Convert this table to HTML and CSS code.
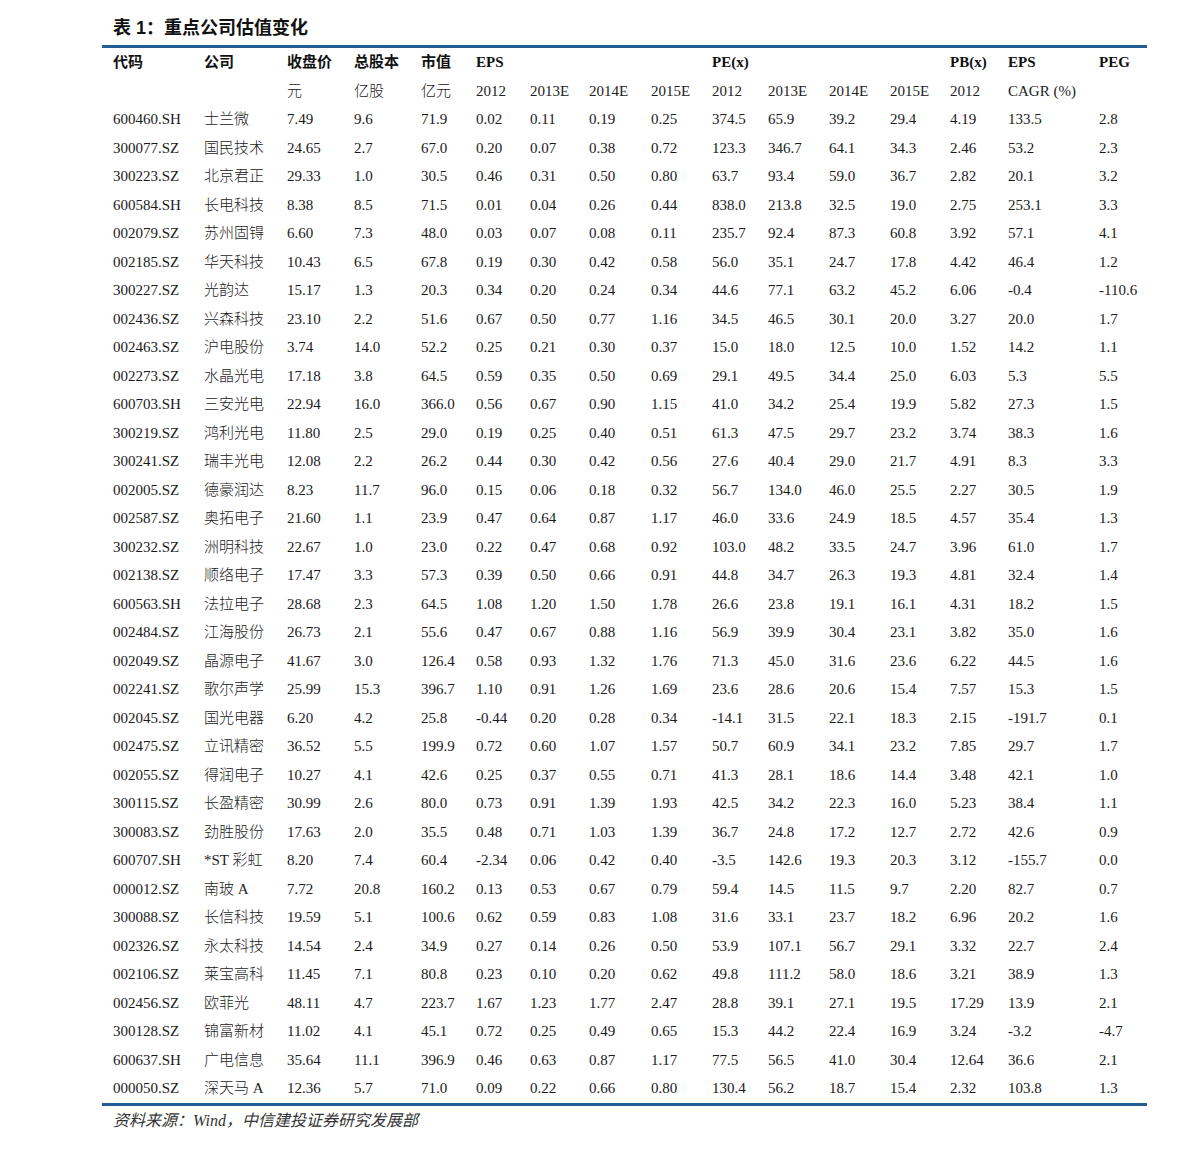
FILE: index.html
```html
<!DOCTYPE html>
<html lang="zh-CN">
<head>
<meta charset="utf-8">
<title>重点公司估值变化</title>
<link rel="stylesheet" href="styles.css">
</head>
<body>
<div class="page">
  <h1 class="title">表 1：重点公司估值变化</h1>
  <table class="tbl">
    <colgroup>
      <col class="w91"><col class="w83"><col class="w67"><col class="w67"><col class="w55">
      <col class="w54"><col class="w59"><col class="w62"><col class="w61">
      <col class="w56"><col class="w61"><col class="w61"><col class="w60">
      <col class="w58"><col class="w91"><col class="w59">
    </colgroup>
    <thead>
      <tr class="h1">
        <th>代码</th><th>公司</th><th>收盘价</th><th>总股本</th><th>市值</th>
        <th class="en">EPS</th><th></th><th></th><th></th>
        <th class="en">PE(x)</th><th></th><th></th><th></th>
        <th class="en">PB(x)</th><th class="en">EPS</th><th class="en">PEG</th>
      </tr>
      <tr class="h2">
        <td></td><td></td><td class="cn">元</td><td class="cn">亿股</td><td class="cn">亿元</td>
        <td>2012</td><td>2013E</td><td>2014E</td><td>2015E</td>
        <td>2012</td><td>2013E</td><td>2014E</td><td>2015E</td>
        <td>2012</td><td>CAGR (%)</td><td></td>
      </tr>
    </thead>
    <tbody id="rows">
<tr><td>600460.SH</td><td>士兰微</td><td>7.49</td><td>9.6</td><td>71.9</td><td>0.02</td><td>0.11</td><td>0.19</td><td>0.25</td><td>374.5</td><td>65.9</td><td>39.2</td><td>29.4</td><td>4.19</td><td>133.5</td><td>2.8</td></tr>
<tr><td>300077.SZ</td><td>国民技术</td><td>24.65</td><td>2.7</td><td>67.0</td><td>0.20</td><td>0.07</td><td>0.38</td><td>0.72</td><td>123.3</td><td>346.7</td><td>64.1</td><td>34.3</td><td>2.46</td><td>53.2</td><td>2.3</td></tr>
<tr><td>300223.SZ</td><td>北京君正</td><td>29.33</td><td>1.0</td><td>30.5</td><td>0.46</td><td>0.31</td><td>0.50</td><td>0.80</td><td>63.7</td><td>93.4</td><td>59.0</td><td>36.7</td><td>2.82</td><td>20.1</td><td>3.2</td></tr>
<tr><td>600584.SH</td><td>长电科技</td><td>8.38</td><td>8.5</td><td>71.5</td><td>0.01</td><td>0.04</td><td>0.26</td><td>0.44</td><td>838.0</td><td>213.8</td><td>32.5</td><td>19.0</td><td>2.75</td><td>253.1</td><td>3.3</td></tr>
<tr><td>002079.SZ</td><td>苏州固锝</td><td>6.60</td><td>7.3</td><td>48.0</td><td>0.03</td><td>0.07</td><td>0.08</td><td>0.11</td><td>235.7</td><td>92.4</td><td>87.3</td><td>60.8</td><td>3.92</td><td>57.1</td><td>4.1</td></tr>
<tr><td>002185.SZ</td><td>华天科技</td><td>10.43</td><td>6.5</td><td>67.8</td><td>0.19</td><td>0.30</td><td>0.42</td><td>0.58</td><td>56.0</td><td>35.1</td><td>24.7</td><td>17.8</td><td>4.42</td><td>46.4</td><td>1.2</td></tr>
<tr><td>300227.SZ</td><td>光韵达</td><td>15.17</td><td>1.3</td><td>20.3</td><td>0.34</td><td>0.20</td><td>0.24</td><td>0.34</td><td>44.6</td><td>77.1</td><td>63.2</td><td>45.2</td><td>6.06</td><td>-0.4</td><td>-110.6</td></tr>
<tr><td>002436.SZ</td><td>兴森科技</td><td>23.10</td><td>2.2</td><td>51.6</td><td>0.67</td><td>0.50</td><td>0.77</td><td>1.16</td><td>34.5</td><td>46.5</td><td>30.1</td><td>20.0</td><td>3.27</td><td>20.0</td><td>1.7</td></tr>
<tr><td>002463.SZ</td><td>沪电股份</td><td>3.74</td><td>14.0</td><td>52.2</td><td>0.25</td><td>0.21</td><td>0.30</td><td>0.37</td><td>15.0</td><td>18.0</td><td>12.5</td><td>10.0</td><td>1.52</td><td>14.2</td><td>1.1</td></tr>
<tr><td>002273.SZ</td><td>水晶光电</td><td>17.18</td><td>3.8</td><td>64.5</td><td>0.59</td><td>0.35</td><td>0.50</td><td>0.69</td><td>29.1</td><td>49.5</td><td>34.4</td><td>25.0</td><td>6.03</td><td>5.3</td><td>5.5</td></tr>
<tr><td>600703.SH</td><td>三安光电</td><td>22.94</td><td>16.0</td><td>366.0</td><td>0.56</td><td>0.67</td><td>0.90</td><td>1.15</td><td>41.0</td><td>34.2</td><td>25.4</td><td>19.9</td><td>5.82</td><td>27.3</td><td>1.5</td></tr>
<tr><td>300219.SZ</td><td>鸿利光电</td><td>11.80</td><td>2.5</td><td>29.0</td><td>0.19</td><td>0.25</td><td>0.40</td><td>0.51</td><td>61.3</td><td>47.5</td><td>29.7</td><td>23.2</td><td>3.74</td><td>38.3</td><td>1.6</td></tr>
<tr><td>300241.SZ</td><td>瑞丰光电</td><td>12.08</td><td>2.2</td><td>26.2</td><td>0.44</td><td>0.30</td><td>0.42</td><td>0.56</td><td>27.6</td><td>40.4</td><td>29.0</td><td>21.7</td><td>4.91</td><td>8.3</td><td>3.3</td></tr>
<tr><td>002005.SZ</td><td>德豪润达</td><td>8.23</td><td>11.7</td><td>96.0</td><td>0.15</td><td>0.06</td><td>0.18</td><td>0.32</td><td>56.7</td><td>134.0</td><td>46.0</td><td>25.5</td><td>2.27</td><td>30.5</td><td>1.9</td></tr>
<tr><td>002587.SZ</td><td>奥拓电子</td><td>21.60</td><td>1.1</td><td>23.9</td><td>0.47</td><td>0.64</td><td>0.87</td><td>1.17</td><td>46.0</td><td>33.6</td><td>24.9</td><td>18.5</td><td>4.57</td><td>35.4</td><td>1.3</td></tr>
<tr><td>300232.SZ</td><td>洲明科技</td><td>22.67</td><td>1.0</td><td>23.0</td><td>0.22</td><td>0.47</td><td>0.68</td><td>0.92</td><td>103.0</td><td>48.2</td><td>33.5</td><td>24.7</td><td>3.96</td><td>61.0</td><td>1.7</td></tr>
<tr><td>002138.SZ</td><td>顺络电子</td><td>17.47</td><td>3.3</td><td>57.3</td><td>0.39</td><td>0.50</td><td>0.66</td><td>0.91</td><td>44.8</td><td>34.7</td><td>26.3</td><td>19.3</td><td>4.81</td><td>32.4</td><td>1.4</td></tr>
<tr><td>600563.SH</td><td>法拉电子</td><td>28.68</td><td>2.3</td><td>64.5</td><td>1.08</td><td>1.20</td><td>1.50</td><td>1.78</td><td>26.6</td><td>23.8</td><td>19.1</td><td>16.1</td><td>4.31</td><td>18.2</td><td>1.5</td></tr>
<tr><td>002484.SZ</td><td>江海股份</td><td>26.73</td><td>2.1</td><td>55.6</td><td>0.47</td><td>0.67</td><td>0.88</td><td>1.16</td><td>56.9</td><td>39.9</td><td>30.4</td><td>23.1</td><td>3.82</td><td>35.0</td><td>1.6</td></tr>
<tr><td>002049.SZ</td><td>晶源电子</td><td>41.67</td><td>3.0</td><td>126.4</td><td>0.58</td><td>0.93</td><td>1.32</td><td>1.76</td><td>71.3</td><td>45.0</td><td>31.6</td><td>23.6</td><td>6.22</td><td>44.5</td><td>1.6</td></tr>
<tr><td>002241.SZ</td><td>歌尔声学</td><td>25.99</td><td>15.3</td><td>396.7</td><td>1.10</td><td>0.91</td><td>1.26</td><td>1.69</td><td>23.6</td><td>28.6</td><td>20.6</td><td>15.4</td><td>7.57</td><td>15.3</td><td>1.5</td></tr>
<tr><td>002045.SZ</td><td>国光电器</td><td>6.20</td><td>4.2</td><td>25.8</td><td>-0.44</td><td>0.20</td><td>0.28</td><td>0.34</td><td>-14.1</td><td>31.5</td><td>22.1</td><td>18.3</td><td>2.15</td><td>-191.7</td><td>0.1</td></tr>
<tr><td>002475.SZ</td><td>立讯精密</td><td>36.52</td><td>5.5</td><td>199.9</td><td>0.72</td><td>0.60</td><td>1.07</td><td>1.57</td><td>50.7</td><td>60.9</td><td>34.1</td><td>23.2</td><td>7.85</td><td>29.7</td><td>1.7</td></tr>
<tr><td>002055.SZ</td><td>得润电子</td><td>10.27</td><td>4.1</td><td>42.6</td><td>0.25</td><td>0.37</td><td>0.55</td><td>0.71</td><td>41.3</td><td>28.1</td><td>18.6</td><td>14.4</td><td>3.48</td><td>42.1</td><td>1.0</td></tr>
<tr><td>300115.SZ</td><td>长盈精密</td><td>30.99</td><td>2.6</td><td>80.0</td><td>0.73</td><td>0.91</td><td>1.39</td><td>1.93</td><td>42.5</td><td>34.2</td><td>22.3</td><td>16.0</td><td>5.23</td><td>38.4</td><td>1.1</td></tr>
<tr><td>300083.SZ</td><td>劲胜股份</td><td>17.63</td><td>2.0</td><td>35.5</td><td>0.48</td><td>0.71</td><td>1.03</td><td>1.39</td><td>36.7</td><td>24.8</td><td>17.2</td><td>12.7</td><td>2.72</td><td>42.6</td><td>0.9</td></tr>
<tr><td>600707.SH</td><td>*ST 彩虹</td><td>8.20</td><td>7.4</td><td>60.4</td><td>-2.34</td><td>0.06</td><td>0.42</td><td>0.40</td><td>-3.5</td><td>142.6</td><td>19.3</td><td>20.3</td><td>3.12</td><td>-155.7</td><td>0.0</td></tr>
<tr><td>000012.SZ</td><td>南玻 A</td><td>7.72</td><td>20.8</td><td>160.2</td><td>0.13</td><td>0.53</td><td>0.67</td><td>0.79</td><td>59.4</td><td>14.5</td><td>11.5</td><td>9.7</td><td>2.20</td><td>82.7</td><td>0.7</td></tr>
<tr><td>300088.SZ</td><td>长信科技</td><td>19.59</td><td>5.1</td><td>100.6</td><td>0.62</td><td>0.59</td><td>0.83</td><td>1.08</td><td>31.6</td><td>33.1</td><td>23.7</td><td>18.2</td><td>6.96</td><td>20.2</td><td>1.6</td></tr>
<tr><td>002326.SZ</td><td>永太科技</td><td>14.54</td><td>2.4</td><td>34.9</td><td>0.27</td><td>0.14</td><td>0.26</td><td>0.50</td><td>53.9</td><td>107.1</td><td>56.7</td><td>29.1</td><td>3.32</td><td>22.7</td><td>2.4</td></tr>
<tr><td>002106.SZ</td><td>莱宝高科</td><td>11.45</td><td>7.1</td><td>80.8</td><td>0.23</td><td>0.10</td><td>0.20</td><td>0.62</td><td>49.8</td><td>111.2</td><td>58.0</td><td>18.6</td><td>3.21</td><td>38.9</td><td>1.3</td></tr>
<tr><td>002456.SZ</td><td>欧菲光</td><td>48.11</td><td>4.7</td><td>223.7</td><td>1.67</td><td>1.23</td><td>1.77</td><td>2.47</td><td>28.8</td><td>39.1</td><td>27.1</td><td>19.5</td><td>17.29</td><td>13.9</td><td>2.1</td></tr>
<tr><td>300128.SZ</td><td>锦富新材</td><td>11.02</td><td>4.1</td><td>45.1</td><td>0.72</td><td>0.25</td><td>0.49</td><td>0.65</td><td>15.3</td><td>44.2</td><td>22.4</td><td>16.9</td><td>3.24</td><td>-3.2</td><td>-4.7</td></tr>
<tr><td>600637.SH</td><td>广电信息</td><td>35.64</td><td>11.1</td><td>396.9</td><td>0.46</td><td>0.63</td><td>0.87</td><td>1.17</td><td>77.5</td><td>56.5</td><td>41.0</td><td>30.4</td><td>12.64</td><td>36.6</td><td>2.1</td></tr>
<tr><td>000050.SZ</td><td>深天马 A</td><td>12.36</td><td>5.7</td><td>71.0</td><td>0.09</td><td>0.22</td><td>0.66</td><td>0.80</td><td>130.4</td><td>56.2</td><td>18.7</td><td>15.4</td><td>2.32</td><td>103.8</td><td>1.3</td></tr>
    </tbody>
  </table>
  <p class="source">资料来源：Wind，中信建投证券研究发展部</p>
</div>
</body>
</html>
```

FILE: styles.css
```css
html, body {
  margin: 0;
  padding: 0;
  background: #ffffff;
}
body {
  font-family: "Liberation Serif", "Noto Sans CJK SC", serif;
  color: #1a1a1a;
}
.page {
  padding: 17px 0 0 102px;
  width: 1045px;
}
.title {
  margin: 0 0 6px 11px;
  font-family: "Liberation Sans", "Noto Sans CJK SC", sans-serif;
  font-size: 18px;
  font-weight: bold;
  line-height: 22px;
  height: 22px;
  color: #111;
}
.tbl {
  border-collapse: collapse;
  table-layout: fixed;
  width: 1045px;
  font-size: 15px;
  border-top: 3px solid #235b93;
  border-bottom: 3px solid #235b93;
}
.tbl td, .tbl th {
  padding: 0 0 0 11px;
  height: 28.5px;
  line-height: 28.5px;
  text-align: left;
  white-space: nowrap;
  vertical-align: middle;
  overflow: visible;
}
.tbl th {
  font-family: "Liberation Sans", "Noto Sans CJK SC", sans-serif;
  font-weight: bold;
  font-size: 15px;
  color: #111;
}
.tbl th.en {
  font-family: "Liberation Serif", serif;
}
.h2 td {
  color: #222;
}
.h2 td.cn,
.tbl tbody td:nth-child(2) {
  font-weight: 300;
  color: #222;
}
.w91 { width: 91px; }
.w83 { width: 83px; }
.w67 { width: 67px; }
.w55 { width: 55px; }
.w54 { width: 54px; }
.w59 { width: 59px; }
.w62 { width: 62px; }
.w61 { width: 61px; }
.w56 { width: 56px; }
.w60 { width: 60px; }
.w58 { width: 58px; }
.source {
  margin: 5px 0 0 11px;
  font-size: 16px;
  font-style: italic;
  line-height: 20px;
  color: #333;
}
```
